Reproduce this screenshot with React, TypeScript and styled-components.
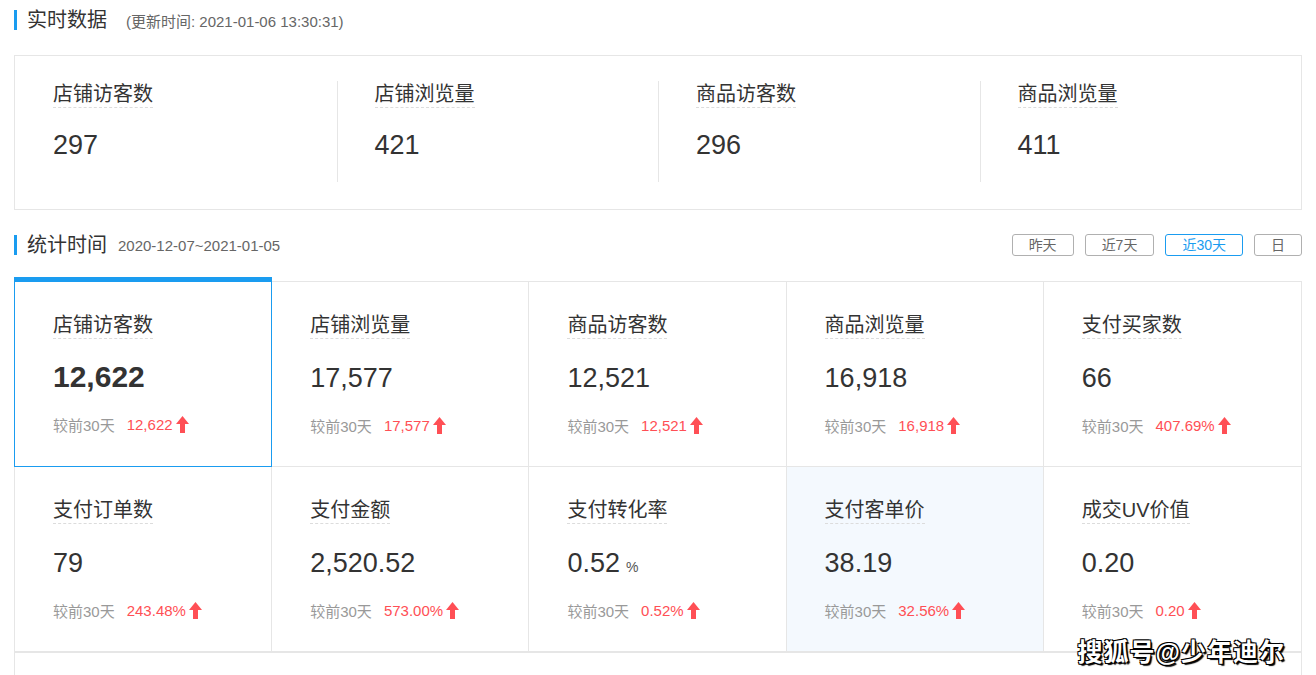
import { createGlobalStyle, styled } from "styled-components";

const GlobalStyle = createGlobalStyle`
  html, body {
    margin: 0;
    padding: 0;
    overflow: hidden;
    background: #fff;
  }
  body {
    font-family: "Liberation Sans", "Noto Sans CJK SC", sans-serif;
    color: #333;
  }
`;

const BLUE = "#1a9cf0";
const RED = "#ff4f55";
const LINE = "#e6e6e6";

const Page = styled.div`
  position: relative;
  width: 1316px;
  height: 675px;
  box-sizing: border-box;
  padding: 10px 14px 0 14px;
`;

const SectionHeader = styled.div<{ $mt?: number }>`
  display: flex;
  align-items: center;
  height: 20px;
  margin-top: ${(p) => p.$mt ?? 0}px;
`;

const HeaderBar = styled.span`
  width: 3px;
  height: 20px;
  background: ${BLUE};
  margin-right: 10px;
`;

const HeaderTitle = styled.span`
  font-size: 20px;
  line-height: 20px;
  color: #333;
`;

const HeaderSub = styled.span<{ $ml: number }>`
  font-size: 15px;
  color: #666;
  margin-left: ${(p) => p.$ml}px;
`;

const RangeButtons = styled.div`
  margin-left: auto;
  display: flex;
  gap: 11px;
`;

const RangeButton = styled.button<{ $active?: boolean }>`
  height: 22px;
  box-sizing: border-box;
  padding: 0 16px;
  border: 1px solid ${(p) => (p.$active ? BLUE : "#b0b0b0")};
  border-radius: 3px;
  background: #fff;
  color: ${(p) => (p.$active ? BLUE : "#666")};
  font-family: inherit;
  font-size: 14px;
  line-height: 20px;
  cursor: pointer;
`;

const RealtimeCard = styled.div`
  margin-top: 25px;
  border: 1px solid ${LINE};
  padding: 25px 0 27px;
  display: grid;
  grid-template-columns: repeat(4, 1fr);
`;

const RealtimeCol = styled.div`
  padding: 0 0 19px 38px;
  & + & {
    border-left: 1px solid ${LINE};
    padding-left: 37px;
  }
`;

const Label = styled.div`
  display: inline-block;
  font-size: 20px;
  line-height: 26px;
  color: #333;
  border-bottom: 1px dashed #dcdcdc;
`;

const Value = styled.div<{ $bold?: boolean; $mt?: number }>`
  margin-top: ${(p) => (p.$mt ?? 21) - (p.$bold ? 1 : 0)}px;
  font-size: ${(p) => (p.$bold ? 30 : 27)}px;
  font-weight: ${(p) => (p.$bold ? 700 : 400)};
  line-height: 36px;
  height: 36px;
  color: #333;
  white-space: nowrap;
`;

const Unit = styled.span`
  font-size: 14px;
  line-height: 0;
  color: #555;
  margin-left: 6px;
`;

const Grid = styled.div`
  margin-top: 26px;
  display: grid;
  grid-template-columns: repeat(5, 1fr);
  border-top: 1px solid ${LINE};
  border-left: 1px solid ${LINE};
  border-right: 1px solid ${LINE};
`;

const Cell = styled.div<{ $active?: boolean; $tint?: boolean }>`
  position: relative;
  padding: 30px 0 31px 38px;
  border-right: 1px solid ${LINE};
  border-bottom: 1px solid ${LINE};
  background: ${(p) => (p.$tint ? "#f4f9fe" : "#fff")};
  &:nth-child(5n) {
    border-right: none;
  }
  ${(p) =>
    p.$active &&
    `
    &::before {
      content: "";
      position: absolute;
      left: -1px;
      right: -1px;
      top: -5px;
      bottom: -1px;
      border: 1px solid ${BLUE};
      border-top: 5px solid ${BLUE};
      pointer-events: none;
    }
  `}
`;

const Compare = styled.div`
  margin-top: 19px;
  display: flex;
  align-items: center;
  height: 20px;
  font-size: 15px;
  color: #999;
  white-space: nowrap;
`;

const Delta = styled.span`
  color: ${RED};
  margin-left: 12px;
  margin-right: 3px;
`;

const BelowBox = styled.div`
  height: 40px;
  border: 1px solid ${LINE};
`;

const Watermark = styled.div`
  position: absolute;
  right: 31px;
  top: 632px;
  font-size: 25px;
  font-weight: 700;
  letter-spacing: 1px;
  color: #fff;
  text-shadow: 1px 1px 0 #000, -1px -1px 0 #000, 1px -1px 0 #000,
    -1px 1px 0 #000, 2px 2px 1px #000;
  pointer-events: none;
`;

function UpArrow() {
  return (
    <svg width="13" height="17" viewBox="0 0 13 17">
      <polygon points="6.5,0 13,8 9,8 9,17 4,17 4,8 0,8" fill={RED} />
    </svg>
  );
}

const realtime = [
  { label: "店铺访客数", value: "297" },
  { label: "店铺浏览量", value: "421" },
  { label: "商品访客数", value: "296" },
  { label: "商品浏览量", value: "411" },
];

const stats = [
  { label: "店铺访客数", value: "12,622", delta: "12,622", active: true },
  { label: "店铺浏览量", value: "17,577", delta: "17,577" },
  { label: "商品访客数", value: "12,521", delta: "12,521" },
  { label: "商品浏览量", value: "16,918", delta: "16,918" },
  { label: "支付买家数", value: "66", delta: "407.69%" },
  { label: "支付订单数", value: "79", delta: "243.48%" },
  { label: "支付金额", value: "2,520.52", delta: "573.00%" },
  { label: "支付转化率", value: "0.52", unit: "%", delta: "0.52%" },
  { label: "支付客单价", value: "38.19", delta: "32.56%", tint: true },
  { label: "成交UV价值", value: "0.20", delta: "0.20" },
];

const ranges = ["昨天", "近7天", "近30天", "日"];

export default function App() {
  return (
    <Page>
      <GlobalStyle />
      <SectionHeader>
        <HeaderBar />
        <HeaderTitle>实时数据</HeaderTitle>
        <HeaderSub $ml={19}>(更新时间: 2021-01-06 13:30:31)</HeaderSub>
      </SectionHeader>

      <RealtimeCard>
        {realtime.map((r) => (
          <RealtimeCol key={r.label}>
            <Label>{r.label}</Label>
            <Value $mt={19}>{r.value}</Value>
          </RealtimeCol>
        ))}
      </RealtimeCard>

      <SectionHeader $mt={25}>
        <HeaderBar />
        <HeaderTitle>统计时间</HeaderTitle>
        <HeaderSub $ml={11}>2020-12-07~2021-01-05</HeaderSub>
        <RangeButtons>
          {ranges.map((r) => (
            <RangeButton key={r} $active={r === "近30天"}>
              {r}
            </RangeButton>
          ))}
        </RangeButtons>
      </SectionHeader>

      <Grid>
        {stats.map((s) => (
          <Cell key={s.label} $active={s.active} $tint={s.tint}>
            <Label>{s.label}</Label>
            <Value $bold={s.active}>
              {s.value}
              {s.unit && <Unit>{s.unit}</Unit>}
            </Value>
            <Compare>
              较前30天
              <Delta>{s.delta}</Delta>
              <UpArrow />
            </Compare>
          </Cell>
        ))}
      </Grid>
      <BelowBox />

      <Watermark>搜狐号@少年迪尔</Watermark>
    </Page>
  );
}
